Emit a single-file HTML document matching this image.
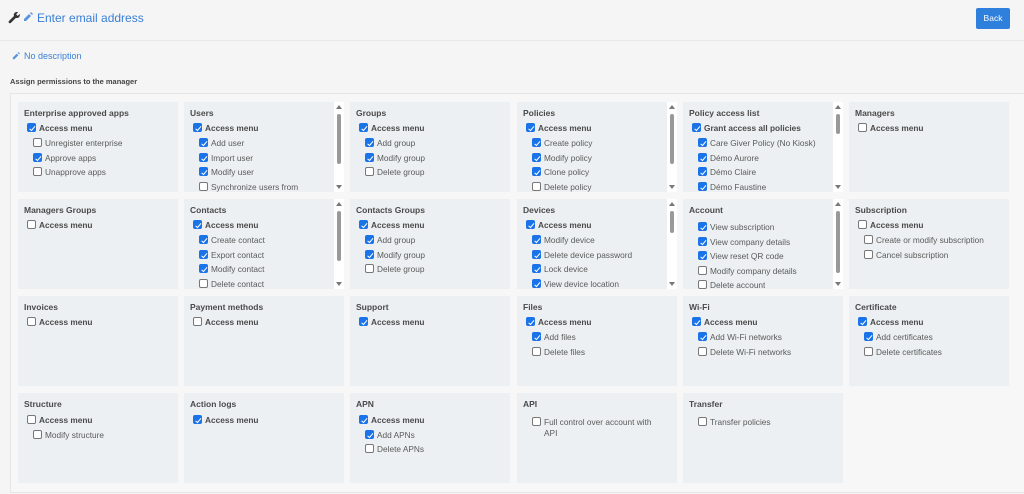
<!DOCTYPE html>
<html><head><meta charset="utf-8"><style>
*{box-sizing:border-box;margin:0;padding:0}
body{width:1024px;height:494px;background:#f5f5f5;font-family:"Liberation Sans",sans-serif;position:relative;overflow:hidden}
.hdr{position:absolute;left:0;top:0;width:1024px;height:41px;border-bottom:1px solid #e8e8e8}
.t{position:absolute;left:37px;top:11px;font-size:12px;color:#3a7fd5}
.back{position:absolute;left:976px;top:8px;width:34px;height:21px;background:#2f7fdc;border-radius:2px;color:#fff;font-size:8.5px;text-align:center;line-height:21px}
.nd{position:absolute;left:24px;top:51px;font-size:9px;color:#3a7fd5}
.ap{position:absolute;left:10px;top:77px;font-size:7.5px;font-weight:bold;color:#444}
.cont{position:absolute;left:10px;top:93px;width:1030px;height:400px;background:#f7f7f7;border:1px solid #e6e6e6}
.c{position:absolute;background:#ecf0f2;width:160px;height:90px}
.c.s{width:150px}
.sb{position:absolute;width:10px;height:90px;background:#fff}
.sb i{position:absolute;left:3px;top:12px;width:4px;height:50px;background:#999;border-radius:2px}
.sb:before{content:"";position:absolute;left:2px;top:3px;border:3px solid transparent;border-bottom:4px solid #777;border-top:0}
.sb:after{content:"";position:absolute;left:2px;bottom:3px;border:3px solid transparent;border-top:4px solid #777;border-bottom:0}
.h{position:absolute;left:6px;top:6px;font-size:8.5px;font-weight:bold;color:#4a4a4a}
.l{position:absolute;left:9px;font-size:8.3px;color:#5a5a5a;white-space:nowrap;line-height:10px}
.l.m{font-weight:bold;color:#4a4a4a}
.l.u{left:15px}
.l b{display:inline-block;width:9px;height:9px;border:1px solid #777;border-radius:2px;background:#fff;vertical-align:-1px;margin-right:3px;position:relative}
.l b.k{background:#1a73e8;border-color:#1a73e8}
.l b.k:after{content:"";position:absolute;left:2.5px;top:0.5px;width:2px;height:4.5px;border:solid #fff;border-width:0 1.3px 1.3px 0;transform:rotate(40deg)}
</style></head><body>
<div class="hdr">
<svg style="position:absolute;left:8px;top:11px" width="13" height="13" viewBox="0 0 16 16"><path d="M14.5 3.5l-2.5 2.5-2-2 2.5-2.5C10.5.8 8 1.5 7.3 3.6 7 4.5 7.1 5.4 7.4 6.1L1.2 12.3c-.6.6-.6 1.6 0 2.3.6.6 1.6.6 2.3 0l6.2-6.2c.8.3 1.6.4 2.5.1 2.1-.7 2.8-3.2 2.3-5z" fill="#333"/></svg>
<svg style="position:absolute;left:23px;top:12px" width="10" height="10" viewBox="0 0 10 10"><path d="M1 7l5-5 2 2-5 5H1z M7 1l1-1 2 2-1 1z" fill="#5b93dd"/></svg>
<div class="t">Enter email address</div>
<div class="back">Back</div>
</div>
<svg style="position:absolute;left:12px;top:52px" width="8" height="8" viewBox="0 0 10 10"><path d="M1 7l5-5 2 2-5 5H1z M7 1l1-1 2 2-1 1z" fill="#5b93dd"/></svg>
<div class="nd">No description</div>
<div class="ap">Assign permissions to the manager</div>
<div class="cont"></div>

<div class="c" style="left:18px;top:102px"><div class="h">Enterprise approved apps</div>
<div class="l m" style="top:21px"><b class="k"></b>Access menu</div>
<div class="l u" style="top:36px"><b></b>Unregister enterprise</div>
<div class="l u" style="top:51px"><b class="k"></b>Approve apps</div>
<div class="l u" style="top:65px"><b></b>Unapprove apps</div></div>

<div class="c s" style="left:184px;top:102px"><div class="h">Users</div>
<div class="l m" style="top:21px"><b class="k"></b>Access menu</div>
<div class="l u" style="top:36px"><b class="k"></b>Add user</div>
<div class="l u" style="top:51px"><b class="k"></b>Import user</div>
<div class="l u" style="top:65px"><b class="k"></b>Modify user</div>
<div class="l u" style="top:80px;height:10px;overflow:hidden"><b></b>Synchronize users from</div></div>
<div class="sb" style="left:334px;top:102px"><i></i></div>

<div class="c" style="left:350px;top:102px"><div class="h">Groups</div>
<div class="l m" style="top:21px"><b class="k"></b>Access menu</div>
<div class="l u" style="top:36px"><b class="k"></b>Add group</div>
<div class="l u" style="top:51px"><b class="k"></b>Modify group</div>
<div class="l u" style="top:65px"><b></b>Delete group</div></div>

<div class="c s" style="left:517px;top:102px"><div class="h">Policies</div>
<div class="l m" style="top:21px"><b class="k"></b>Access menu</div>
<div class="l u" style="top:36px"><b class="k"></b>Create policy</div>
<div class="l u" style="top:51px"><b class="k"></b>Modify policy</div>
<div class="l u" style="top:65px"><b class="k"></b>Clone policy</div>
<div class="l u" style="top:80px;height:10px;overflow:hidden"><b></b>Delete policy</div></div>
<div class="sb" style="left:667px;top:102px"><i></i></div>

<div class="c s" style="left:683px;top:102px"><div class="h">Policy access list</div>
<div class="l m" style="top:21px"><b class="k"></b>Grant access all policies</div>
<div class="l u" style="top:36px"><b class="k"></b>Care Giver Policy (No Kiosk)</div>
<div class="l u" style="top:51px"><b class="k"></b>Démo Aurore</div>
<div class="l u" style="top:65px"><b class="k"></b>Démo Claire</div>
<div class="l u" style="top:80px;height:10px;overflow:hidden"><b class="k"></b>Démo Faustine</div></div>
<div class="sb" style="left:833px;top:102px"><i style="height:20px"></i></div>

<div class="c" style="left:849px;top:102px"><div class="h">Managers</div>
<div class="l m" style="top:21px"><b></b>Access menu</div></div>

<div class="c" style="left:18px;top:199px"><div class="h">Managers Groups</div>
<div class="l m" style="top:21px"><b></b>Access menu</div></div>

<div class="c s" style="left:184px;top:199px"><div class="h">Contacts</div>
<div class="l m" style="top:21px"><b class="k"></b>Access menu</div>
<div class="l u" style="top:36px"><b class="k"></b>Create contact</div>
<div class="l u" style="top:51px"><b class="k"></b>Export contact</div>
<div class="l u" style="top:65px"><b class="k"></b>Modify contact</div>
<div class="l u" style="top:80px;height:10px;overflow:hidden"><b></b>Delete contact</div></div>
<div class="sb" style="left:334px;top:199px"><i></i></div>

<div class="c" style="left:350px;top:199px"><div class="h">Contacts Groups</div>
<div class="l m" style="top:21px"><b class="k"></b>Access menu</div>
<div class="l u" style="top:36px"><b class="k"></b>Add group</div>
<div class="l u" style="top:51px"><b class="k"></b>Modify group</div>
<div class="l u" style="top:65px"><b></b>Delete group</div></div>

<div class="c s" style="left:517px;top:199px"><div class="h">Devices</div>
<div class="l m" style="top:21px"><b class="k"></b>Access menu</div>
<div class="l u" style="top:36px"><b class="k"></b>Modify device</div>
<div class="l u" style="top:51px"><b class="k"></b>Delete device password</div>
<div class="l u" style="top:65px"><b class="k"></b>Lock device</div>
<div class="l u" style="top:80px;height:10px;overflow:hidden"><b class="k"></b>View device location</div></div>
<div class="sb" style="left:667px;top:199px"><i style="height:22px"></i></div>

<div class="c s" style="left:683px;top:199px"><div class="h">Account</div>
<div class="l u" style="top:23px"><b class="k"></b>View subscription</div>
<div class="l u" style="top:38px"><b class="k"></b>View company details</div>
<div class="l u" style="top:52px"><b class="k"></b>View reset QR code</div>
<div class="l u" style="top:67px"><b></b>Modify company details</div>
<div class="l u" style="top:81px;height:9px;overflow:hidden"><b></b>Delete account</div></div>
<div class="sb" style="left:833px;top:199px"><i style="height:62px"></i></div>

<div class="c" style="left:849px;top:199px"><div class="h">Subscription</div>
<div class="l m" style="top:21px"><b></b>Access menu</div>
<div class="l u" style="top:36px"><b></b>Create or modify subscription</div>
<div class="l u" style="top:51px"><b></b>Cancel subscription</div></div>

<div class="c" style="left:18px;top:296px"><div class="h">Invoices</div>
<div class="l m" style="top:21px"><b></b>Access menu</div></div>
<div class="c" style="left:184px;top:296px"><div class="h">Payment methods</div>
<div class="l m" style="top:21px"><b></b>Access menu</div></div>
<div class="c" style="left:350px;top:296px"><div class="h">Support</div>
<div class="l m" style="top:21px"><b class="k"></b>Access menu</div></div>
<div class="c" style="left:517px;top:296px"><div class="h">Files</div>
<div class="l m" style="top:21px"><b class="k"></b>Access menu</div>
<div class="l u" style="top:36px"><b class="k"></b>Add files</div>
<div class="l u" style="top:51px"><b></b>Delete files</div></div>
<div class="c" style="left:683px;top:296px"><div class="h">Wi-Fi</div>
<div class="l m" style="top:21px"><b class="k"></b>Access menu</div>
<div class="l u" style="top:36px"><b class="k"></b>Add Wi-Fi networks</div>
<div class="l u" style="top:51px"><b></b>Delete Wi-Fi networks</div></div>
<div class="c" style="left:849px;top:296px"><div class="h">Certificate</div>
<div class="l m" style="top:21px"><b class="k"></b>Access menu</div>
<div class="l u" style="top:36px"><b class="k"></b>Add certificates</div>
<div class="l u" style="top:51px"><b></b>Delete certificates</div></div>

<div class="c" style="left:18px;top:393px"><div class="h">Structure</div>
<div class="l m" style="top:22px"><b></b>Access menu</div>
<div class="l u" style="top:37px"><b></b>Modify structure</div></div>
<div class="c" style="left:184px;top:393px"><div class="h">Action logs</div>
<div class="l m" style="top:22px"><b class="k"></b>Access menu</div></div>
<div class="c" style="left:350px;top:393px"><div class="h">APN</div>
<div class="l m" style="top:22px"><b class="k"></b>Access menu</div>
<div class="l u" style="top:37px"><b class="k"></b>Add APNs</div>
<div class="l u" style="top:51px"><b></b>Delete APNs</div></div>
<div class="c" style="left:517px;top:393px"><div class="h">API</div>
<div class="l u" style="top:24px"><b></b>Full control over account with</div>
<div class="l u" style="top:35px;left:27px">API</div></div>
<div class="c" style="left:683px;top:393px"><div class="h">Transfer</div>
<div class="l u" style="top:24px"><b></b>Transfer policies</div></div>
</body></html>
